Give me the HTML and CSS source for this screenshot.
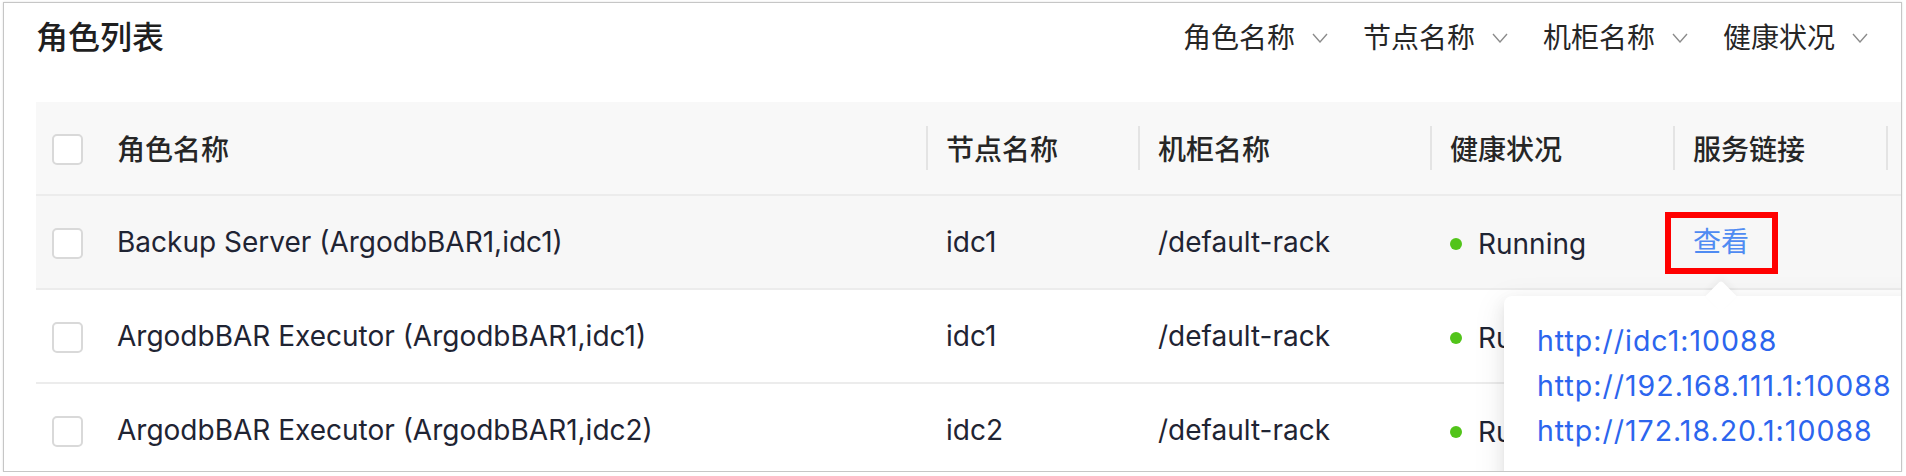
FILE: index.html
```html
<!DOCTYPE html>
<html lang="zh-CN">
<head>
<meta charset="utf-8">
<title>角色列表</title>
<link rel="stylesheet" href="styles.css">
</head>
<body>
<div class="panel">
  <div class="toolbar">
    <h2 class="title">角色列表</h2>
    <div class="filters">
      <span class="filter">角色名称<svg class="chev" viewBox="0 0 16 10"><path d="M1 1 L8 9 L15 1"/></svg></span>
      <span class="filter">节点名称<svg class="chev" viewBox="0 0 16 10"><path d="M1 1 L8 9 L15 1"/></svg></span>
      <span class="filter">机柜名称<svg class="chev" viewBox="0 0 16 10"><path d="M1 1 L8 9 L15 1"/></svg></span>
      <span class="filter">健康状况<svg class="chev" viewBox="0 0 16 10"><path d="M1 1 L8 9 L15 1"/></svg></span>
    </div>
  </div>
  <div class="table-wrap">
    <table class="table">
      <colgroup>
        <col class="c-sel"><col class="c-name"><col class="c-node"><col class="c-rack"><col class="c-health"><col class="c-link"><col class="c-extra">
      </colgroup>
      <thead>
        <tr>
          <th class="sel"><span class="checkbox"></span></th>
          <th class="sep">角色名称</th>
          <th class="sep">节点名称</th>
          <th class="sep">机柜名称</th>
          <th class="sep">健康状况</th>
          <th class="sep">服务链接</th>
          <th></th>
        </tr>
      </thead>
      <tbody>
        <tr class="hover">
          <td class="sel"><span class="checkbox"></span></td>
          <td>Backup Server (ArgodbBAR1,idc1)</td>
          <td>idc1</td>
          <td>/default-rack</td>
          <td><span class="status"><span class="dot"></span>Running</span></td>
          <td class="link-cell">
            <span class="view-link">查看</span>
            <div class="popover">
              <a class="pop-link">http://idc1:10088</a>
              <a class="pop-link">http://192.168.111.1:10088</a>
              <a class="pop-link">http://172.18.20.1:10088</a>
            </div>
          </td>
          <td></td>
        </tr>
        <tr>
          <td class="sel"><span class="checkbox"></span></td>
          <td>ArgodbBAR Executor (ArgodbBAR1,idc1)</td>
          <td>idc1</td>
          <td>/default-rack</td>
          <td><span class="status"><span class="dot"></span>Running</span></td>
          <td></td>
          <td></td>
        </tr>
        <tr>
          <td class="sel"><span class="checkbox"></span></td>
          <td>ArgodbBAR Executor (ArgodbBAR1,idc2)</td>
          <td>idc2</td>
          <td>/default-rack</td>
          <td><span class="status"><span class="dot"></span>Running</span></td>
          <td></td>
          <td></td>
        </tr>
      </tbody>
    </table>
  </div>
</div>
</body>
</html>
```

FILE: styles.css
```css
* { box-sizing: border-box; }

html, body {
  margin: 0;
  padding: 0;
  background: #ffffff;
}

body {
  font-family: "Inter", "Noto Sans CJK SC", sans-serif;
  color: #1f2433;
  padding: 2px 4px 0 3px;
}

.panel {
  height: 470px;
  border: 1px solid #c6c6c6;
  box-shadow: 0 0 2px rgba(0, 0, 0, 0.12);
  background: #ffffff;
  overflow: hidden;
  padding-left: 32px;
}

.toolbar {
  display: flex;
  align-items: center;
  justify-content: space-between;
  height: 70px;
  padding-right: 33px;
  margin-bottom: 29px;
}

.title {
  margin: 0;
  font-size: 32px;
  font-weight: 500;
  color: #1f1f1f;
  line-height: 40px;
}

.filters {
  display: flex;
  align-items: center;
  gap: 35px;
}

.filter {
  display: flex;
  align-items: center;
  gap: 17px;
  font-size: 28px;
  color: #262626;
  line-height: 40px;
}

.chev {
  width: 16px;
  height: 10px;
  fill: none;
  stroke: #8c8c8c;
  stroke-width: 1.4;
}

.table-wrap {
  overflow: hidden;
}

.table {
  table-layout: fixed;
  width: 2072px;
  border-collapse: collapse;
  border-spacing: 0;
  font-size: 28px;
}

.c-sel { width: 63px; }
.c-name { width: 829px; }
.c-node { width: 212px; }
.c-rack { width: 292px; }
.c-health { width: 243px; }
.c-link { width: 213px; }
.c-extra { width: 220px; }

.table th {
  height: 93px;
  background-color: #f8f8f8;
  text-align: left;
  font-weight: 500;
  color: #262626;
  padding: 0 18px;
  border-bottom: 2px solid #ececec;
  vertical-align: middle;
  white-space: nowrap;
}

.table th.sep {
  background-image: linear-gradient(#e4e4e4, #e4e4e4);
  background-repeat: no-repeat;
  background-size: 2px 44px;
  background-position: right center;
}

.table td {
  height: 94px;
  padding: 0 18px;
  border-bottom: 2px solid #ececec;
  vertical-align: middle;
  white-space: nowrap;
  color: #1f2433;
}

.table th.sel,
.table td.sel {
  padding: 0;
  text-align: center;
}

.table tr.hover td {
  background: #f7f7f7;
}

.checkbox {
  display: inline-block;
  width: 31px;
  height: 31px;
  border: 2px solid #d9d9d9;
  border-radius: 5px;
  background: #ffffff;
  vertical-align: middle;
}

.status {
  display: inline-flex;
  align-items: center;
  gap: 16px;
}

.dot {
  width: 12px;
  height: 12px;
  border-radius: 50%;
  background: #52c41a;
}

.link-cell {
  position: relative;
}

.view-link {
  display: inline-block;
  color: #4f8bf2;
  line-height: 40px;
  padding: 4px 23px 6px 22px;
  margin: -10px -29px -12px -28px;
  border: 6px solid #ff0000;
}

.popover {
  position: absolute;
  left: -171px;
  top: 100px;
  width: 470px;
  height: 260px;
  background: #ffffff;
  border-radius: 8px;
  padding: 22px 33px;
  display: flex;
  flex-direction: column;
  box-shadow: 0 6px 16px 0 rgba(0, 0, 0, 0.08),
              0 3px 6px -4px rgba(0, 0, 0, 0.12),
              0 9px 28px 8px rgba(0, 0, 0, 0.05);
  z-index: 2;
}

.popover::before {
  content: "";
  position: absolute;
  left: 206px;
  top: -11px;
  width: 22px;
  height: 22px;
  background: #ffffff;
  transform: rotate(45deg);
  border-radius: 3px 0 0 0;
  box-shadow: -3px -3px 6px rgba(0, 0, 0, 0.04);
}

.pop-link {
  display: block;
  position: relative;
  color: #2c65ee;
  font-size: 28.5px;
  letter-spacing: 1px;
  line-height: 45px;
  text-decoration: none;
  white-space: nowrap;
}
```
